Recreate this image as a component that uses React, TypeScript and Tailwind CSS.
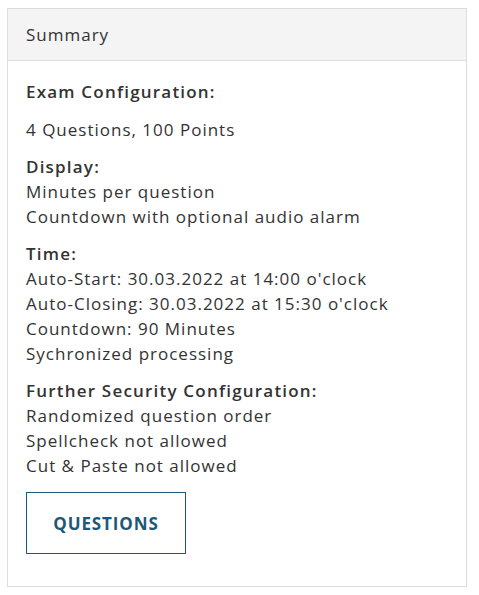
import React from "react";

const sections = [
  { title: "Display:", lines: ["Minutes per question", "Countdown with optional audio alarm"] },
  {
    title: "Time:",
    lines: [
      "Auto-Start: 30.03.2022 at 14:00 o'clock",
      "Auto-Closing: 30.03.2022 at 15:30 o'clock",
      "Countdown: 90 Minutes",
      "Sychronized processing",
    ],
  },
  {
    title: "Further Security Configuration:",
    lines: ["Randomized question order", "Spellcheck not allowed", "Cut & Paste not allowed"],
  },
];

export default function App() {
  return (
    <div className="bg-white pl-[7px] pt-[8px] pr-[12px] pb-[8px] text-[17px] leading-[25px] tracking-[1px] text-[#333333] font-['Open_Sans',sans-serif]">
      <div className="border border-[#dddddd] bg-white">
        <div className="h-[52px] flex items-center bg-[#f4f4f4] border-b border-[#dddddd] px-[18px]">
          Summary
        </div>
        <div className="px-[18px] pt-[18px] pb-[32px]">
          <p className="font-semibold tracking-[1.2px] mb-[13px]">Exam Configuration:</p>
          <p className="mb-[12px]">4 Questions, 100 Points</p>
          {sections.map((s) => (
            <div key={s.title} className="mb-[12px]">
              <p className="font-semibold tracking-[1.2px]">{s.title}</p>
              {s.lines.map((l) => (
                <p key={l}>{l}</p>
              ))}
            </div>
          ))}
          <button
            type="button"
            className="mt-[2px] w-[160px] h-[62px] border border-[#1d5878] text-[#1d5878] font-bold tracking-[0.9px]"
          >
            QUESTIONS
          </button>
        </div>
      </div>
    </div>
  );
}
